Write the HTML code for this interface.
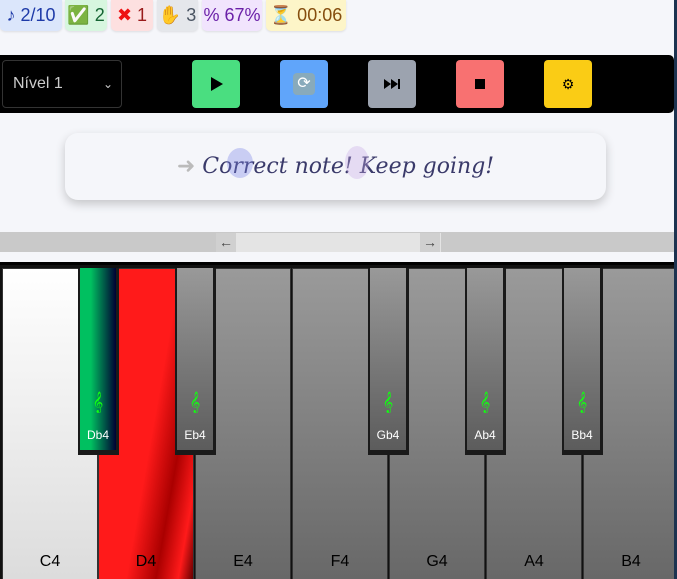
<!DOCTYPE html>
<html><head><meta charset="utf-8"><style>
*{box-sizing:border-box;margin:0;padding:0}
body{width:677px;height:579px;overflow:hidden;background:#1c3350;font-family:"Liberation Sans","DejaVu Sans",sans-serif;position:relative}
#pg{position:absolute;left:0;top:0;width:674px;height:579px;background:#f5f6fa;overflow:hidden}
.b{position:absolute;top:0;height:31px;border-radius:0 0 5px 5px;font-size:18px;line-height:31px;text-align:center;box-shadow:0 1px 2px rgba(0,0,0,.1);white-space:nowrap}
.bar{position:absolute;left:0;top:55px;width:674px;height:58px;background:#000;border-radius:0 5px 5px 0}
.sel{position:absolute;left:2px;top:60px;width:120px;height:48px;border:1px solid #333;border-radius:4px;color:#ccc;font-size:16px;line-height:46px;padding-left:10px}
.btn{position:absolute;top:60px;width:48px;height:48px;border-radius:4px;display:flex;align-items:center;justify-content:center}
.card{position:absolute;left:65px;top:133px;width:541px;height:67px;background:#f5f6fa;border-radius:13px;box-shadow:0 4px 10px rgba(0,0,0,.2);text-align:center;font-family:"DejaVu Serif",serif;font-style:italic;font-size:22px;line-height:67px;color:#3a3a6a}
.sb{position:absolute;left:0;top:232px;width:674px;height:20px;background:#c9c9c9}
.piano{position:absolute;left:0;top:262px;width:674px;height:317px;background:#111;border-top:3px solid #000}
.w{position:absolute;top:3px;height:312px;width:96px;border:1px solid #333;background:linear-gradient(#9a9a9a,#686868);text-align:center;font-size:16px;padding-top:284px;color:#000}
.k{position:absolute;top:3px;width:41px;height:187px;background:#1a1a1a}
.k div{position:absolute;left:2px;top:0;width:36px;height:182px;background:linear-gradient(#999,#5c5c5c);color:#fff;font-size:12px;text-align:center}
.k span{position:absolute;width:100%;left:0;top:124px;color:#1f1;font-size:18px}
.k i{position:absolute;width:100%;left:0;top:160px;font-style:normal}
</style></head><body><div id="pg">
<div class="b" style="left:0;width:62px;background:#dbe6fb;color:#1e3aa8">♪ 2/10</div>
<div class="b" style="left:65px;width:42px;background:#d7f6df;color:#166534">✅ 2</div>
<div class="b" style="left:111px;width:42px;background:#fde0e0;color:#991b1b"><span style="color:#e11;font-weight:bold">✖</span> 1</div>
<div class="b" style="left:157px;width:41px;background:#e5e7eb;color:#4b5563">✋ 3</div>
<div class="b" style="left:202px;width:60px;background:#f1e4fd;color:#6b21a8">% 67%</div>
<div class="b" style="left:266px;width:80px;background:#fdf5c8;color:#854d0e">⏳ 00:06</div>
<div class="bar"></div>
<div class="sel">Nível 1<span style="position:absolute;right:8px;font-size:12px">⌄</span></div>
<div class="btn" style="left:192px;background:#4ade80"><svg width="16" height="16"><path d="M3 1L15 8L3 15Z" fill="#000"/></svg></div>
<div class="btn" style="left:280px;background:#60a5fa"><div style="width:22px;height:22px;background:#8ab;border-radius:4px;color:#fff;font-size:16px;line-height:22px;text-align:center">⟳</div></div>
<div class="btn" style="left:368px;background:#9ca3af"><svg width="18" height="12"><path d="M1 1L8 6L1 11ZM8 1L15 6L8 11Z" fill="#000"/><rect x="15" y="1" width="2" height="10"/></svg></div>
<div class="btn" style="left:456px;background:#f87171"><div style="width:10px;height:10px;background:#000"></div></div>
<div class="btn" style="left:544px;background:#facc15;font-size:14px">⚙</div>
<div class="card"><span style="color:#bbb;font-style:normal">➜</span> Correct note! Keep going!
<div style="position:absolute;left:162px;top:15px;width:26px;height:30px;border-radius:50%;background:rgba(120,130,230,.35)"></div>
<div style="position:absolute;left:280px;top:13px;width:24px;height:33px;border-radius:50%;background:rgba(200,170,230,.35)"></div></div>
<div class="sb"><div style="position:absolute;left:216px;top:1px;width:225px;height:19px;background:#e4e4e4"></div>
<div style="position:absolute;left:216px;top:1px;width:20px;height:19px;background:#d0d0d0;font-size:14px;line-height:18px;text-align:center;color:#444">←</div>
<div style="position:absolute;left:420px;top:1px;width:20px;height:19px;background:#d0d0d0;font-size:14px;line-height:18px;text-align:center;color:#444">→</div></div>
<div class="piano">
<div class="w" style="left:2px;background:linear-gradient(#fff,#dcdcdc)">C4</div>
<div class="w" style="left:98px;background:linear-gradient(100deg,#ff1a1a 55%,#a00 75%,#ff1a1a 90%,#600)">D4</div>
<div class="w" style="left:195px">E4</div>
<div class="w" style="left:292px">F4</div>
<div class="w" style="left:389px">G4</div>
<div class="w" style="left:486px">A4</div>
<div class="w" style="left:583px">B4</div>
<div class="k" style="left:78px"><div style="background:linear-gradient(90deg,#00c060 30%,#003 100%)"><span>𝄞</span><i>Db4</i></div></div>
<div class="k" style="left:175px"><div><span>𝄞</span><i>Eb4</i></div></div>
<div class="k" style="left:368px"><div><span>𝄞</span><i>Gb4</i></div></div>
<div class="k" style="left:465px"><div><span>𝄞</span><i>Ab4</i></div></div>
<div class="k" style="left:562px"><div><span>𝄞</span><i>Bb4</i></div></div>
</div>
</div></body></html>
